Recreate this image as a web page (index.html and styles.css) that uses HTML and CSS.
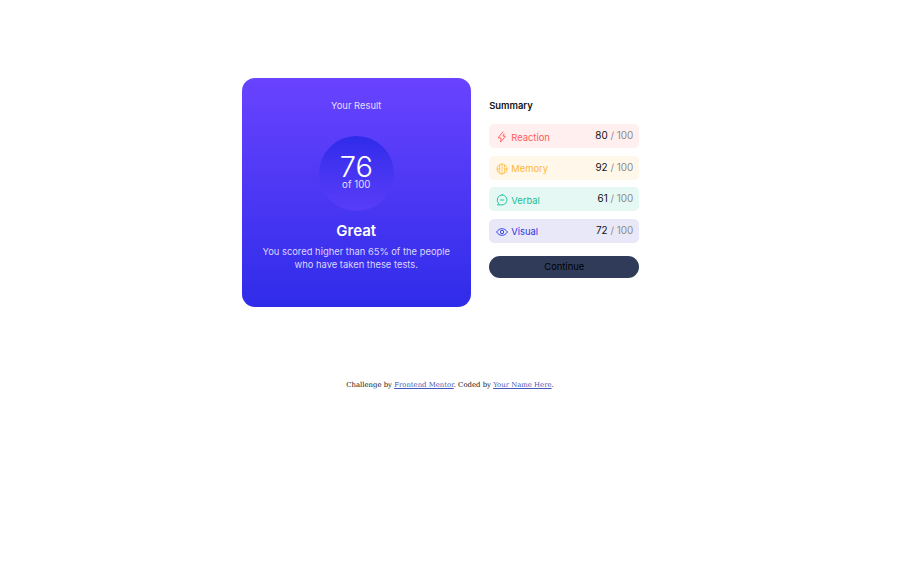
FILE: index.html
```html
<!DOCTYPE html>
<html lang="en">
<head>
    <meta charset="UTF-8">
    <meta name="viewport" content="width=device-width, initial-scale=1.0">
    <title>Results summary</title>
    <link rel="stylesheet" href="styles.css">
</head>
<body>
    <main class="wrapper">
        <section class="result">
            <h1>Your Result</h1>
            <div class="score-circle">
                <span class="score">76</span>
                <span class="score-of">of 100</span>
            </div>
            <h2>Great</h2>
            <p>You scored higher than 65% of the people<br>who have taken these tests.</p>
        </section>

        <section class="summary">
            <h3>Summary</h3>

            <div class="row row-reaction">
                <span class="label">
                    <svg viewBox="0 0 20 20" fill="none" stroke="currentColor" stroke-width="1.5" stroke-linejoin="round" stroke-linecap="round"><path d="M11.5 1.500 3.500 11.500h5L7.500 18.500l8.500-10h-4.500L13.500 4.500"/></svg>
                    Reaction
                </span>
                <span class="points"><b>80</b> / 100</span>
            </div>

            <div class="row row-memory">
                <span class="label">
                    <svg viewBox="0 0 20 20" fill="none" stroke="currentColor" stroke-width="1.3" stroke-linecap="round"><circle cx="10" cy="10" r="8.300"/><path d="M10 1.700v16.600M6 3.500C4 7 7.500 8 6 10s-1 5 1 7M14 3.500c2 3.500-1.500 4.500 0 6.500s1 5-1 7M2 10h4M14 10h4"/></svg>
                    Memory
                </span>
                <span class="points"><b>92</b> / 100</span>
            </div>

            <div class="row row-verbal">
                <span class="label">
                    <svg viewBox="0 0 20 20" fill="none" stroke="currentColor" stroke-width="1.500" stroke-linecap="round" stroke-linejoin="round"><path d="M10 1.500a8.300 8.300 0 0 1 0 16.600H2.500l1.800-2.600A8.300 8.300 0 0 1 10 1.500Z"/><path d="M7 10h6"/></svg>
                    Verbal
                </span>
                <span class="points"><b>61</b> / 100</span>
            </div>

            <div class="row row-visual">
                <span class="label">
                    <svg viewBox="0 0 20 20" fill="none" stroke="currentColor" stroke-width="1.500" stroke-linejoin="round"><path d="M1 10C3.500 6 6.800 4.500 10 4.500S16.500 6 19 10C16.500 14 13.200 15.500 10 15.500S3.500 14 1 10Z"/><circle cx="10" cy="10" r="2.800"/></svg>
                    Visual
                </span>
                <span class="points"><b>72</b> / 100</span>
            </div>

            <button class="continue">Continue</button>
        </section>
    </main>

    <footer class="attribution">
        Challenge by <a href="#">Frontend Mentor</a>. Coded by <a href="#">Your Name Here</a>.
    </footer>
</body>
</html>
```

FILE: styles.css
```css
body {
    margin: 0;
    background-color: #fff;
    font-family: "Inter", "Lato", sans-serif;
}

.wrapper {
    display: flex;
    justify-content: center;
    padding-top: 78px;
}

.result {
    width: 229px;
    height: 229px;
    box-sizing: border-box;
    padding-top: 20px;
    border-radius: 13px;
    background: linear-gradient(180deg, #6943ff 0%, #2f2ce9 100%);
    color: #fff;
    text-align: center;
}

.result h1 {
    margin: 0;
    font-size: 9.400px;
    line-height: 15px;
    font-weight: 400;
    color: #e4dfff;
}

.score-circle {
    display: flex;
    flex-direction: column;
    align-items: center;
    justify-content: center;
    width: 75px;
    height: 75px;
    box-sizing: border-box;
    padding-bottom: 4px;
    margin: 23px auto 0;
    border-radius: 50%;
    background: linear-gradient(180deg, #2e2be9 0%, rgba(105, 67, 255, 0.5) 100%);
}

.score {
    font-size: 29px;
    line-height: 26px;
    font-weight: 300;
}

.score-of {
    font-size: 9.700px;
    line-height: 10px;
    color: #e4dfff;
}

.result h2 {
    margin: 10px 0 0;
    font-size: 15px;
    line-height: 20px;
    font-weight: 600;
}

.result p {
    margin: 4px 0 0;
    font-size: 9.400px;
    line-height: 13px;
    color: #dcd6ff;
}

.summary {
    width: 150px;
    padding: 0 19px 0 18.500px;
}

.summary h3 {
    margin: 20px 0 0;
    font-size: 9.400px;
    line-height: 15px;
    font-weight: 600;
    color: #111;
}

.row {
    display: flex;
    justify-content: space-between;
    align-items: center;
    height: 24px;
    padding: 0 6px 0 7px;
    margin-top: 7.500px;
    border-radius: 5px;
    font-size: 9.400px;
}

.summary h3 + .row {
    margin-top: 11px;
}

.label {
    display: flex;
    align-items: center;
    gap: 3px;
    padding-top: 2px;
}

.label svg {
    width: 12px;
    height: 12px;
}

.points {
    color: #8b8b8b;
    font-size: 9.900px;
    padding-bottom: 2px;
}

.points b {
    font-weight: 400;
    color: #111;
}

.row-reaction { background-color: #ffefef; color: #ff5c5c; }
.row-memory { background-color: #fff8ea; color: #ffb733; }
.row-verbal { background-color: #e6f8f4; color: #14bf97; }
.row-visual { background-color: #e8e8f9; color: #2a35e0; }

.continue {
    display: block;
    width: 100%;
    height: 22px;
    margin-top: 13px;
    padding: 0;
    border: none;
    border-radius: 11px;
    background-color: #303b5a;
    color: #000;
    font-family: inherit;
    font-size: 9.400px;
}

.attribution {
    margin-top: 73px;
    text-align: center;
    font-family: "DejaVu Serif", serif;
    font-size: 6.900px;
    line-height: 11px;
    color: #111;
}

.attribution a {
    color: #4358b8;
}
```
